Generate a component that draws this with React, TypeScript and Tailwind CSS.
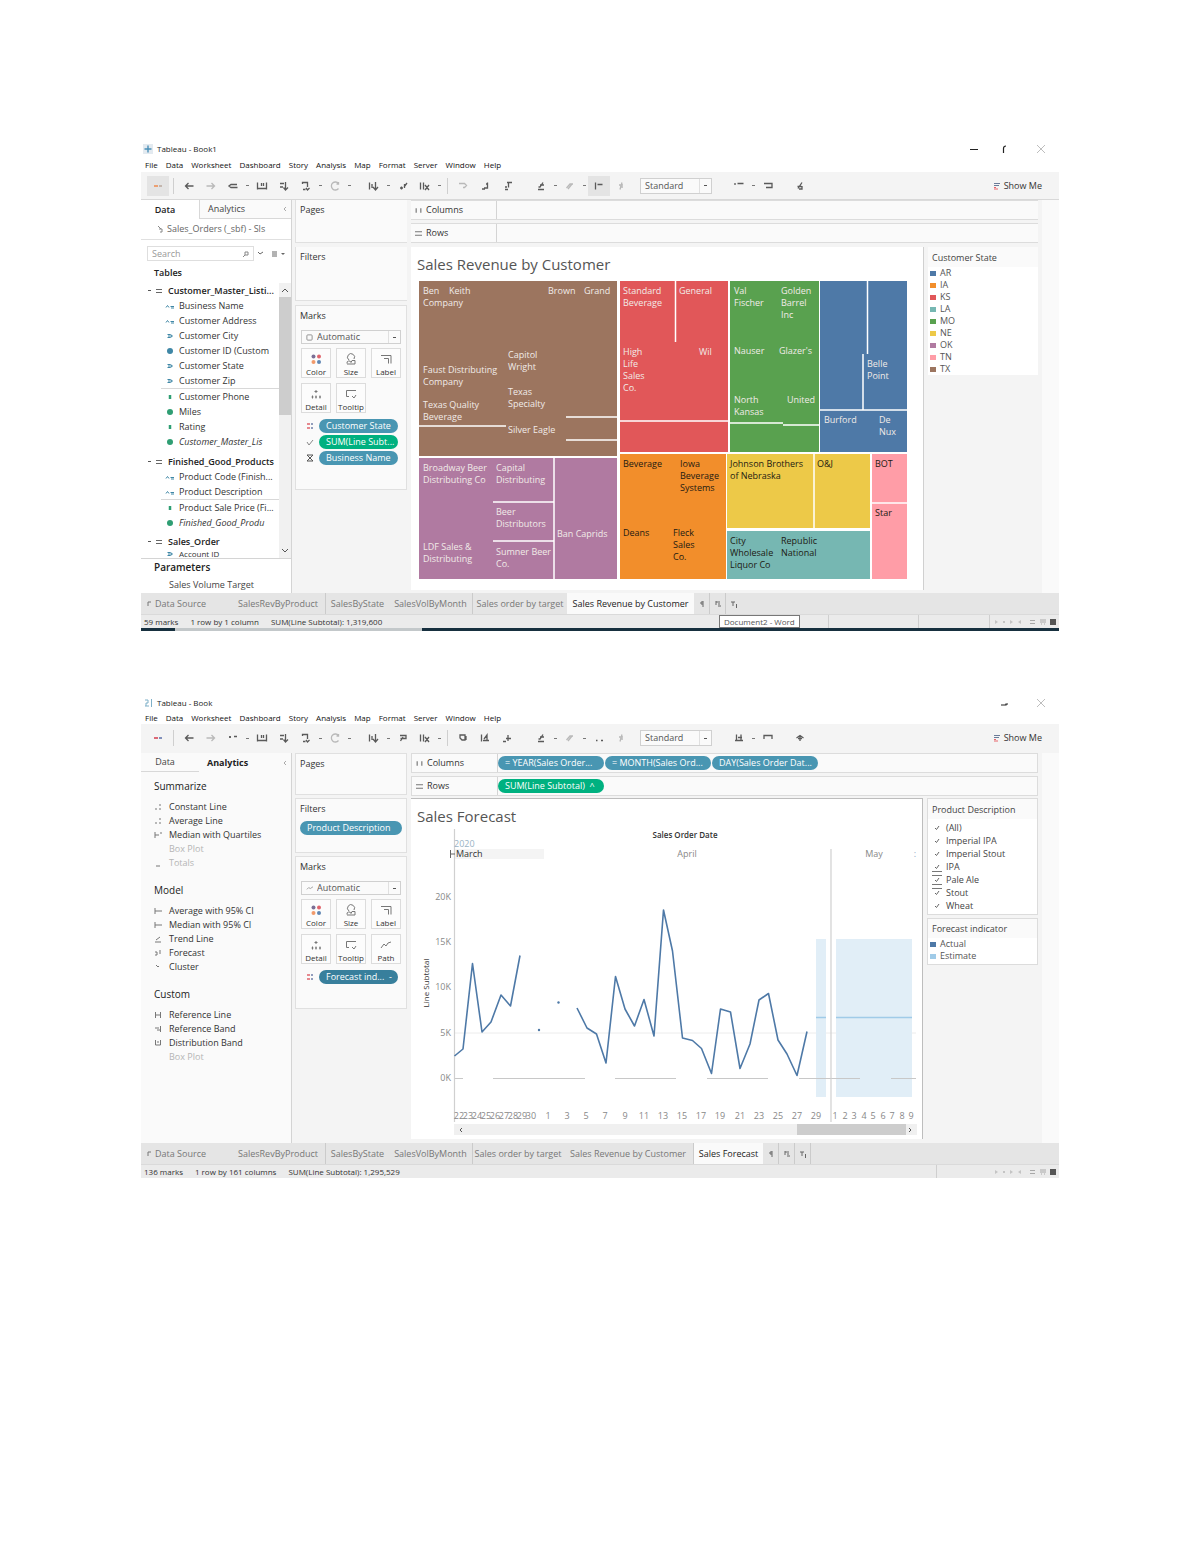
import React, { ReactNode, useState } from "react";

type IconName =
  | "back" | "forward" | "undo" | "save" | "addData" | "pause" | "refresh"
  | "newSheet" | "clear" | "fit" | "swap" | "sortAsc" | "sortDesc" | "highlight"
  | "group" | "labels" | "pin" | "cards" | "present" | "share" | "chartA"
  | "undoAlt" | "clearAlt" | "swapAlt" | "sortAlt" | "labelsAlt" | "presentAlt" | "shareAlt" | "totals";

const iconPaths: Record<IconName, string> = {
  back: "M10.5 6H2.5M5.5 3L2.5 6l3 3",
  forward: "M1.5 6h8M6.5 3l3 3-3 3",
  undo: "M10 4.5H4L2 6l2 1.500h6.500",
  undoAlt: "M2 5h2M3 4v2M7 4.500h3",
  save: "M1.500 2.500v7M1.500 8.500h9M10.500 2.500v7M5.500 3v3M7.500 3v3",
  addData: "M2 3.500h4M7.500 2v8M5.500 7.500l2 2.500 2.500-2.500M2 7h3",
  pause: "M2.500 4V2.500h5V7M3 9.500h2.500M6 8l1.500 2 2-2",
  refresh: "M9.500 3.500a4 4 0 1 0 0 5M9.500 2v2h-2",
  newSheet: "M1.500 2.500v7M4 4v4M7.500 2v8M5 7l2.500 3 2.500-3",
  clear: "M3 8h3M4.500 6.500v3M7 7l3-4M7.500 4v4",
  clearAlt: "M3 3.500h6v3H3.500M6 5L3.500 9",
  chartA: "M1.500 2.500v7M4.500 2.500v7M6 5l4 5M10 5L6 10",
  fit: "M2 3.500h5.500l2 2-2 2H6",
  swap: "M8.500 2.500V8H5M3 9h3M7 4h2",
  swapAlt: "M2.500 2.500v7M5 7l3-4v6M4 8.500h6",
  sortAsc: "M4 9.500h3M6 2.500h5M7.500 2.500v5M4 7h2",
  sortDesc: "M2 9.500h3M5 6.500h5M7 3v6",
  sortAlt: "M3 3h5v5H5L3 6zM9 4v4",
  highlight: "M3 9.500h6M8 2.500L5 7H3.500M5 5h4",
  group: "M2.500 8L6 4h3M4 9l4-5",
  labels: "M2.500 2.500v7M4.500 4.500h5",
  labelsAlt: "M3 8.500h1.500M8 8.500h2",
  pin: "M4 5h4M7 2.500L5 9.500M5 7h3",
  totals: "M3.500 2.500v6M8 2.500v6M2 8.500h8M5 5.500h4",
  cards: "M2 3v2M4.500 3.500h6",
  present: "M2 3.500h8v4H4",
  presentAlt: "M2 7V3.500h8V7",
  share: "M4 8.500l4-6M5 9h3v-3M3.500 6.500h4",
  shareAlt: "M2.500 6L6 3.500 9.500 6M6 4v5M4 6.500h4",
};

const Icon = ({ name, light }: { name: IconName; light?: boolean }) => (
  <svg viewBox="0 0 12 12" className="size-3" aria-hidden="true">
    <path d={iconPaths[name]} fill="none" stroke={light ? "#b9b9b9" : "#5a5a5a"} strokeWidth="1.300" />
  </svg>
);

const ToolButton = ({ name, light, active }: { name: IconName; light?: boolean; active?: boolean }) => (
  <button
    aria-label={name}
    className={`flex h-5 w-[22px] shrink-0 items-center justify-center ${active ? "bg-[#e4e4e4]" : ""}`}
  >
    <Icon name={name} light={light} />
  </button>
);

const Caret = () => (
  <span className="flex w-[7px] shrink-0 justify-center">
    <span className="h-px w-[3px] bg-[#777]" />
  </span>
);

const Divider = () => <span className="mx-1 h-4 w-px shrink-0 bg-[#cfcfcf]" />;

const ShowMeIcon = () => (
  <svg viewBox="0 0 8 8" className="size-2" aria-hidden="true">
    <path d="M1 1.500h6M1 3.500h5" stroke="#6b7c99" strokeWidth="1" />
    <path d="M1 5.500h2M1 7h4" stroke="#e8646a" strokeWidth="1" />
  </svg>
);

const Toolbar = ({ forecast }: { forecast?: boolean }) => (
  <div
    className={`flex items-center border-b bg-[#f4f4f4] pr-[17px] pl-[6px] ${
      forecast ? "h-[29px] border-[#f4f4f4]" : "h-7 border-[#d8d8d8]"
    }`}
  >
    <button
      aria-label="Start page"
      className={`flex h-5 w-[22px] items-center justify-center ${forecast ? "" : "bg-[#e4e4e4]"}`}
    >
      <svg viewBox="0 0 10 6" className="h-[6px] w-[10px]" aria-hidden="true">
        <path d="M1 3h4" stroke={forecast ? "#d33b4c" : "#ef8a4c"} strokeWidth="1.500" />
        <path d="M6 3h3" stroke={forecast ? "#5b6fa8" : "#b9a79c"} strokeWidth="1.500" />
      </svg>
    </button>
    <Divider />
    <ToolButton name="back" />
    <ToolButton name="forward" light />
    <ToolButton name={forecast ? "undoAlt" : "undo"} />
    <Caret />
    <ToolButton name="save" />
    <ToolButton name="addData" />
    <ToolButton name="pause" />
    <Caret />
    <ToolButton name="refresh" light />
    <Caret />
    <span className="w-[10px]" />
    <ToolButton name="newSheet" />
    <Caret />
    <ToolButton name={forecast ? "clearAlt" : "clear"} />
    <ToolButton name="chartA" />
    <Caret />
    <Divider />
    <ToolButton name={forecast ? "sortAlt" : "fit"} light={!forecast} />
    <ToolButton name={forecast ? "swapAlt" : "swap"} />
    <ToolButton name={forecast ? "sortDesc" : "sortAsc"} />
    <span className="w-3" />
    <ToolButton name="highlight" />
    <Caret />
    <ToolButton name="group" light />
    <Caret />
    <ToolButton name={forecast ? "labelsAlt" : "labels"} active={!forecast} />
    <ToolButton name="pin" light />
    <span className="w-2" />
    <FlatSelect label="Fit" value="Standard" className="h-4 w-[72px]" />
    <span className="w-4" />
    <ToolButton name={forecast ? "totals" : "cards"} />
    <Caret />
    <ToolButton name={forecast ? "presentAlt" : "present"} />
    <span className="w-[10px]" />
    <ToolButton name={forecast ? "shareAlt" : "share"} />
    <button className="ml-auto flex items-center gap-[3px] text-[9px] text-[#333]">
      <ShowMeIcon />
      Show Me
    </button>
  </div>
);

const FlatSelect = ({
  label,
  value,
  icon,
  className,
}: {
  label: string;
  value: string;
  icon?: ReactNode;
  className: string;
}) => (
  <div className={`flex items-center border border-[#d0d0d0] bg-[#fafafa] ${className}`}>
    {icon}
    <select
      aria-label={label}
      className="h-full min-w-0 flex-1 appearance-none bg-transparent pl-1 text-[9px] leading-3 text-[#555] outline-none"
    >
      <option>{value}</option>
    </select>
    <span className="flex h-full w-3 items-center justify-center border-l border-[#e0e0e0]">
      <span className="h-px w-[3px] bg-[#555]" />
    </span>
  </div>
);

const menus = ["File", "Data", "Worksheet", "Dashboard", "Story", "Analysis", "Map", "Format", "Server", "Window", "Help"];

const TitleBar = ({ title, forecast }: { title: string; forecast?: boolean }) => (
  <>
    <div className="flex h-4 items-center pr-3 pl-[2px] text-[8px] text-[#222]">
      <svg viewBox="0 0 10 10" className="mr-1 size-[10px]" aria-hidden="true">
        {forecast ? (
          <path d="M2 2h3v3H3v3M6 8H2M8.500 1v8" fill="none" stroke="#7fb0c8" />
        ) : (
          <>
            <rect width="10" height="10" fill="#e3eaf0" />
            <path d="M1.500 5h7M5 1.500v7" stroke="#4a90b8" strokeWidth="1.400" />
          </>
        )}
      </svg>
      {title}
      <div className="ml-auto flex items-center">
        {!forecast && (
          <button aria-label="Minimize" className="flex w-[30px] justify-center">
            <span className="h-px w-2 bg-[#222]" />
          </button>
        )}
        <button aria-label="Restore" className="flex w-[30px] justify-center">
          <svg viewBox="0 0 8 8" className="size-2" aria-hidden="true">
            <path d={forecast ? "M1 6h5V5h2" : "M3.500 8V3.500Q3.500 1 6 1"} fill="none" stroke="#222" strokeWidth="1.200" />
          </svg>
        </button>
        <button aria-label="Close" className="ml-4 flex w-3 justify-center">
          <svg viewBox="0 0 8 8" className="size-2" aria-hidden="true">
            <path d="M0 0l8 8M8 0L0 8" stroke="#bdbdbd" />
          </svg>
        </button>
      </div>
    </div>
    <nav className={`flex items-center gap-2 pl-1 text-[8px] text-[#111] ${forecast ? "h-[13px]" : "h-[15px]"}`}>
      {menus.map((m) => (
        <button key={m}>{m}</button>
      ))}
    </nav>
  </>
);

const pillColors = {
  blue: "bg-[#4996b2]",
  green: "bg-[#00b180]",
  dark: "bg-[#387f9c]",
};

const Pill = ({
  color,
  className,
  children,
}: {
  color: keyof typeof pillColors;
  className?: string;
  children: ReactNode;
}) => (
  <button
    className={`block h-[14px] overflow-hidden rounded-full px-[7px] text-left text-[9px] leading-[14px] whitespace-nowrap text-white ${pillColors[color]} ${className ?? ""}`}
  >
    {children}
  </button>
);

const Card = ({ title, className, children }: { title: string; className?: string; children?: ReactNode }) => (
  <section className={`border border-[#e0e0e0] bg-[#fafafa] px-1 pt-1 ${className ?? ""}`}>
    <h3 className="text-[9px] leading-3 text-[#333]">{title}</h3>
    {children}
  </section>
);

const markIcons: Record<string, ReactNode> = {
  Color: (
    <g stroke="none">
      <circle cx="3.500" cy="3.500" r="2" fill="#7b6f95" />
      <circle cx="9" cy="3.500" r="2" fill="#e0646c" />
      <circle cx="3.500" cy="9" r="2" fill="#f19a6b" />
      <circle cx="9" cy="9" r="2" fill="#5f86b3" />
    </g>
  ),
  Size: <path d="M4 7a3.500 3.500 0 1 1 5-1M2 10.500a2 2 0 0 1 4-1l1-2h3v3.500H2" />,
  Label: <path d="M1 2.500h10v8M4 5.500h4.500v5" />,
  Detail: <path d="M6 2v3M4.500 3.500h3M1.500 9h2M5 9h2M9 9h2M2.500 7.500v3M6 7.500v3M10 7.500v3" />,
  Tooltip: <path d="M11 2.500H1.500v6H4M7 8l2 2 2-3" />,
  Path: <path d="M1 9l3-4 2 2 2-3 3-1" />,
};

const MarkButton = ({ name }: { name: string }) => (
  <button className="flex h-[30px] flex-col items-center justify-between border border-[#dcdcdc] bg-[#fcfcfc] pt-1 text-[8px] leading-[10px] text-[#333]">
    <svg viewBox="0 0 12 12" className="size-3 shrink-0" fill="none" stroke="#777" aria-hidden="true">
      {markIcons[name]}
    </svg>
    {name}
  </button>
);

const MarksCard = ({ names, children, className }: { names: string[]; children: ReactNode; className: string }) => (
  <Card title="Marks" className={className}>
    <div className="px-px">
      <FlatSelect
        label="Mark type"
        value="Automatic"
        className="mt-2 h-[14px]"
        icon={
          <svg viewBox="0 0 8 8" className="ml-1 size-[7px]" aria-hidden="true">
            {names.includes("Path") ? (
              <path d="M1 5l2-2 2 1 3-2" fill="none" stroke="#999" />
            ) : (
              <rect x="1" y="1" width="6" height="6" rx="1" fill="none" stroke="#888" />
            )}
          </svg>
        }
      />
      <div className="mt-1 grid grid-cols-3 gap-[5px]">
        {names.map((n) => (
          <MarkButton key={n} name={n} />
        ))}
      </div>
      <div className="mt-[6px] flex flex-col gap-[2px]">{children}</div>
    </div>
  </Card>
);

const MarkRow = ({
  icon,
  color,
  children,
}: {
  icon: "color" | "size" | "detail";
  color: keyof typeof pillColors;
  children: ReactNode;
}) => (
  <div className="flex items-center">
    <svg viewBox="0 0 8 8" className="mx-[5px] size-2 shrink-0" fill="none" aria-hidden="true">
      {icon === "color" && (
        <>
          <path d="M1 2h3M1 6h3" stroke="#e0646c" strokeWidth="1.500" />
          <path d="M5 2h2M5 6h2" stroke="#6f7fa8" strokeWidth="1.500" />
        </>
      )}
      {icon === "size" && <path d="M1 4l2 3 4-5" stroke="#888" />}
      {icon === "detail" && <path d="M1 1h6L4 4l3 3H1l3-3z" stroke="#555" />}
    </svg>
    <Pill color={color} className="mr-[3px] flex-1">
      {children}
    </Pill>
  </div>
);

const Shelf = ({ name, boxed, children }: { name: "Columns" | "Rows"; boxed?: boolean; children?: ReactNode }) => (
  <div className={`flex h-5 bg-[#fafafa] ${boxed ? "border border-[#dcdcdc]" : "border-y border-[#dcdcdc]"}`}>
    <div className="flex w-[86px] shrink-0 items-center gap-1 border-r border-[#d4d4d4] pl-1 text-[9px] text-[#333]">
      <svg viewBox="0 0 6 6" className="size-[7px]" aria-hidden="true">
        <path d={name === "Columns" ? "M1 1v4M5 1v4" : "M0 1.500h6M0 4.500h6"} stroke="#777" strokeWidth="1" />
      </svg>
      {name}
    </div>
    <div className="flex min-w-0 flex-1 items-center gap-px">{children}</div>
  </div>
);

type FieldKind = "text" | "geo" | "key" | "num" | "dot";

const FieldIcon = ({ kind }: { kind: FieldKind }) => {
  const color = kind === "num" || kind === "dot" ? "#2f9e73" : "#3f87a6";
  return (
    <svg viewBox="0 0 10 8" className="h-2 w-[10px] shrink-0" fill="none" stroke={color} aria-hidden="true">
      {kind === "text" && <path d="M1 5.500l1.500-2L4 5.500M5.500 4.500h3.500M6 6h3" />}
      {kind === "geo" && <path d="M2.500 2.500h3l2 1.500-2 1.500h-3M3 4h4" />}
      {kind === "key" && <circle cx="5" cy="4" r="3" fill={color} stroke="none" />}
      {kind === "num" && <path d="M5 2v4" strokeWidth="2.500" />}
      {kind === "dot" && <circle cx="5" cy="4" r="3" fill={color} stroke="none" />}
    </svg>
  );
};

const Field = ({
  kind,
  italic,
  last,
  children,
}: {
  kind: FieldKind;
  italic?: boolean;
  last?: boolean;
  children: ReactNode;
}) => (
  <li
    className={`flex items-center gap-1 pl-6 whitespace-nowrap text-[#333] ${italic ? "italic" : ""} ${
      last ? "h-[10px] text-[8px] leading-[10px]" : "h-[15px] text-[9px]"
    }`}
  >
    <FieldIcon kind={kind} />
    {children}
  </li>
);

const TableName = ({ className, children }: { className?: string; children: ReactNode }) => (
  <h4 className={`flex h-[15px] items-center pl-[7px] text-[9px] font-semibold whitespace-nowrap text-[#222] ${className ?? ""}`}>
    <span className="h-px w-[3px] bg-[#555]" />
    <svg viewBox="0 0 6 6" className="mr-[6px] ml-[5px] size-[6px]" aria-hidden="true">
      <path d="M0 1.500h6M0 4.500h6" stroke="#666" />
    </svg>
    {children}
  </h4>
);

const PaneTabs = ({ active }: { active: "Data" | "Analytics" }) => (
  <div className="flex h-[19px] text-[9px] text-[#444]">
    <button
      className={`w-[58px] pr-[10px] ${
        active === "Data" ? "bg-white font-semibold text-[#222]" : "border-b border-[#d8d8d8]"
      }`}
    >
      Data
    </button>
    <button
      className={`flex flex-1 items-center justify-between pr-1 pl-2 ${
        active === "Analytics" ? "font-bold text-[#222]" : "border-b border-l border-[#d8d8d8] bg-[#fafafa]"
      }`}
    >
      Analytics
      <svg viewBox="0 0 4 6" className="h-[6px] w-1" aria-hidden="true">
        <path d="M3 1L1 3l2 2" fill="none" stroke="#aaa" />
      </svg>
    </button>
  </div>
);

const DataPane = () => {
  const [search, setSearch] = useState("");
  return (
    <aside className="w-[151px] shrink-0 border-r border-[#d4d4d4] bg-white">
      <PaneTabs active="Data" />
      <div className="flex h-[21px] items-center gap-1 border-b border-[#e0e0e0] pl-4 text-[9px] text-[#666]">
        <svg viewBox="0 0 6 8" className="h-2 w-[6px]" fill="none" stroke="#888" aria-hidden="true">
          <path d="M1 1l3 3M2 4h3v3H3" />
        </svg>
        Sales_Orders (_sbf) - Sls
      </div>
      <div className="flex items-center gap-1 pt-[6px] pl-[6px]">
        <div className="flex h-[15px] w-[107px] items-center border border-[#dedede] pr-1">
          <input
            aria-label="Search"
            placeholder="Search"
            value={search}
            onChange={(e) => setSearch(e.target.value)}
            className="min-w-0 flex-1 pl-1 text-[9px] outline-none placeholder:text-[#999]"
          />
          <svg viewBox="0 0 6 6" className="size-[6px]" fill="none" stroke="#888" aria-hidden="true">
            <path d="M2 1h3v3H2zM2 4L0 6" />
          </svg>
        </div>
        <svg viewBox="0 0 30 8" className="h-2 w-[30px]" fill="none" stroke="#666" aria-hidden="true">
          <path d="M0 2l2 2 3-2M14 2h5M14 4h5M14 6h5" />
          <path d="M23 3h4l-2 2z" fill="#666" stroke="none" />
        </svg>
      </div>
      <h3 className="flex h-[22px] items-center pt-[2px] pl-[13px] text-[9px] font-semibold text-[#222]">Tables</h3>
      <div className="flex h-[275px] overflow-hidden">
        <div className="min-w-0 flex-1 overflow-hidden">
          <TableName>Customer_Master_Listi...</TableName>
          <ul>
            <Field kind="text">Business Name</Field>
            <Field kind="text">Customer Address</Field>
            <Field kind="geo">Customer City</Field>
            <Field kind="key">Customer ID (Custom</Field>
            <Field kind="geo">Customer State</Field>
            <Field kind="geo">Customer Zip</Field>
          </ul>
          <ul className="ml-5 border-t border-[#d8d8d8] [&>li]:pl-1">
            <Field kind="num">Customer Phone</Field>
            <Field kind="dot">Miles</Field>
            <Field kind="num">Rating</Field>
            <Field kind="dot" italic>Customer_Master_Lis</Field>
          </ul>
          <TableName className="mt-[5px]">Finished_Good_Products</TableName>
          <ul>
            <Field kind="text">Product Code (Finish...</Field>
            <Field kind="text">Product Description</Field>
          </ul>
          <ul className="ml-5 border-t border-[#d8d8d8] [&>li]:pl-1">
            <Field kind="num">Product Sale Price (Fi...</Field>
            <Field kind="dot" italic>Finished_Good_Produ</Field>
          </ul>
          <TableName className="mt-1">Sales_Order</TableName>
          <ul>
            <Field kind="geo" last>Account ID</Field>
          </ul>
        </div>
        <div className="flex w-3 flex-col items-center bg-[#f1f1f1]">
          <svg viewBox="0 0 8 6" className="my-1 h-[6px] w-2" fill="none" stroke="#555" aria-hidden="true">
            <path d="M1 5l3-3 3 3" />
          </svg>
          <div className="h-[118px] w-full bg-[#cdcdcd]" />
          <svg viewBox="0 0 8 6" className="mt-auto mb-1 h-[6px] w-2" fill="none" stroke="#555" aria-hidden="true">
            <path d="M1 1l3 3 3-3" />
          </svg>
        </div>
      </div>
      <div className="border-t border-[#d4d4d4] pl-[13px]">
        <h3 className="h-[17px] text-[10px] leading-[17px] font-semibold text-[#222]">Parameters</h3>
        <p className="h-[17px] pl-[15px] text-[9px] leading-[17px] text-[#444]">Sales Volume Target</p>
      </div>
    </aside>
  );
};

const analyticsGroups: { title: string; items: { label: string; d?: string; off?: boolean }[] }[] = [
  {
    title: "Summarize",
    items: [
      { label: "Constant Line", d: "M1 6h2M6 1v2M6 5v2" },
      { label: "Average Line", d: "M1 6h2M6 1v2M6 5v2" },
      { label: "Median with Quartiles", d: "M1 1v6M1 4h4M6 2h2" },
      { label: "Box Plot", off: true },
      { label: "Totals", d: "M2 7h4", off: true },
    ],
  },
  {
    title: "Model",
    items: [
      { label: "Average with 95% CI", d: "M1 1v6M1 4h7" },
      { label: "Median with 95% CI", d: "M1 1v6M1 4h7" },
      { label: "Trend Line", d: "M1 7h6M2 5l4-3" },
      { label: "Forecast", d: "M1 3h2v3H1M6 1v4" },
      { label: "Cluster", d: "M2 2l2 2 1-1" },
    ],
  },
  {
    title: "Custom",
    items: [
      { label: "Reference Line", d: "M1.500 1v6M6.500 1v6M2 4h4" },
      { label: "Reference Band", d: "M1 3h4M3 5h3M6.500 1v6" },
      { label: "Distribution Band", d: "M1.500 1v5h5V1M3 3h2" },
      { label: "Box Plot", off: true },
    ],
  },
];

const AnalyticsPane = () => (
  <aside className="w-[151px] shrink-0 border-r border-[#d4d4d4] bg-[#fafafa]">
    <PaneTabs active="Analytics" />
    <div className="flex flex-col gap-[10px] pt-1 pl-[13px]">
      {analyticsGroups.map((g) => (
        <section key={g.title}>
          <h3 className="mb-1 text-[10px] leading-5 text-[#222]">{g.title}</h3>
          <ul>
            {g.items.map((item) => (
              <li
                key={item.label}
                className={`flex h-[14px] items-center gap-[7px] text-[9px] whitespace-nowrap ${
                  item.off ? "text-[#b5b5b5]" : "text-[#333]"
                }`}
              >
                <svg viewBox="0 0 8 8" className="size-2" fill="none" stroke="#777" aria-hidden="true">
                  {item.d && <path d={item.d} />}
                </svg>
                {item.label}
              </li>
            ))}
          </ul>
        </section>
      ))}
    </div>
  </aside>
);

const blocks: [string, number, number, number, number][] = [
  ["#9c755f", 0, 0, 198, 175],
  ["#b07aa1", 0, 177, 198, 121],
  ["#e15759", 201, 0, 108, 171],
  ["#59a14f", 311, 0, 89, 171],
  ["#4e79a7", 401, 0, 87, 171],
  ["#f28e2b", 201, 173, 106, 125],
  ["#edc948", 308, 173, 143, 74],
  ["#76b7b2", 308, 250, 143, 48],
  ["#ff9da7", 453, 173, 35, 125],
];

const dividers =
  "M0 145H87M147 136H198M147 159H198M135 177V298M74 221H135M74 260H135M256.500 0V61M201 140H309M311 142H364M364 144H400M448.500 0V73M444 73V129M401 129H488M395 173V247M453 222H488";

// x, centre of the first line, lines
const customers: [number, number, string[]][] = [
  [4, 10, ["Ben", "Company"]],
  [30, 10, ["Keith"]],
  [129, 10, ["Brown"]],
  [165, 10, ["Grand"]],
  [89, 74, ["Capitol", "Wright"]],
  [4, 89, ["Faust Distributing", "Company"]],
  [89, 111, ["Texas", "Specialty"]],
  [4, 124, ["Texas Quality", "Beverage"]],
  [89, 149, ["Silver Eagle"]],
  [204, 10, ["Standard", "Beverage"]],
  [260, 10, ["General"]],
  [204, 71, ["High", "Life", "Sales", "Co."]],
  [280, 71, ["Wil"]],
  [315, 10, ["Val", "Fischer"]],
  [362, 10, ["Golden", "Barrel", "Inc"]],
  [315, 70, ["Nauser"]],
  [360, 70, ["Glazer's"]],
  [315, 119, ["North", "Kansas"]],
  [368, 119, ["United"]],
  [448, 83, ["Belle", "Point"]],
  [405, 139, ["Burford"]],
  [460, 139, ["De", "Nux"]],
  [4, 187, ["Broadway Beer", "Distributing Co"]],
  [77, 187, ["Capital", "Distributing"]],
  [77, 231, ["Beer", "Distributors"]],
  [77, 271, ["Sumner Beer", "Co."]],
  [138, 253, ["Ban Caprids"]],
  [4, 266, ["LDF Sales &", "Distributing"]],
];

const customersDark: [number, number, string[]][] = [
  [204, 183, ["Beverage"]],
  [261, 183, ["Iowa", "Beverage", "Systems"]],
  [204, 252, ["Deans"]],
  [254, 252, ["Fleck", "Sales", "Co."]],
  [311, 183, ["Johnson Brothers", "of Nebraska"]],
  [398, 183, ["O&J"]],
  [311, 260, ["City", "Wholesale", "Liquor Co"]],
  [362, 260, ["Republic", "National"]],
  [456, 183, ["BOT"]],
  [456, 232, ["Star"]],
];

const TreeLabels = ({ data, fill }: { data: typeof customers; fill: string }) => (
  <g fill={fill} fontSize="9">
    {data.map(([x, y, lines]) =>
      lines.map((line, i) => (
        <text key={`${x}-${y}-${i}`} x={x} y={y + 3 + i * 12}>
          {line}
        </text>
      ))
    )}
  </g>
);

const Treemap = () => (
  <svg viewBox="0 0 488 298" className="block h-auto w-full" role="img" aria-label="Sales Revenue by Customer">
    {blocks.map(([color, x, y, w, h]) => (
      <rect key={color} x={x} y={y} width={w} height={h} fill={color} />
    ))}
    <path d={dividers} stroke="#fff" strokeWidth="1.500" />
    <TreeLabels data={customers} fill="#f1ebe8" />
    <TreeLabels data={customersDark} fill="#1d1a12" />
  </svg>
);

const aprilDays = Array.from({ length: 15 }, (_, i) => i * 2 + 1);
const marchDays = Array.from({ length: 9 }, (_, i) => i + 22);
const mayDays = Array.from({ length: 9 }, (_, i) => i + 1);

const ForecastChart = () => (
  <svg viewBox="0 0 511 296" className="block h-auto w-full" role="img" aria-label="Sales Forecast">
    <rect x="43" y="21" width="90" height="10" fill="#f4f4f4" />
    <path d="M43 205H505" stroke="#ececec" />
    <rect x="405" y="111" width="10" height="158" fill="#e1eef7" />
    <rect x="425" y="111" width="76" height="158" fill="#e1eef7" />
    <path d="M405 189.500h10M425 189.500h76" stroke="#a0cbe8" strokeWidth="1.500" />
    <path d="M43 250.500h9M82 250.500h92M204 250.500h61M296 250.500h61M388 250.500h61M480 250.500h25" stroke="#c8c8c8" />
    <path d="M43.500 1V294M420 21V294" stroke="#d0d0d0" strokeWidth="1.200" />
    <g fill="none" stroke="#4e79a7" strokeWidth="1.600" strokeLinejoin="round">
      <path d="M43.500 228L52 221L61.500 135.500L71 204L80 194L90 167L99.500 178L109 127.500" />
      <path d="M166 180L176 200L185.500 206L195 235L204.500 148.500L214 181L223.500 198L233 171.500L243 208L252.500 82L261.500 123L271.500 210L281.500 212.500L290.500 220.500L300.500 245.500L309.500 181L319.500 184L329 240.500L339 216L348 172L357.500 165.500L367 212L376 226L386 247.500L396 203.500" />
    </g>
    <circle cx="128" cy="202" r="1.200" fill="#4e79a7" />
    <circle cx="147.500" cy="174.500" r="1.200" fill="#4e79a7" />
    <g fontSize="9" fill="#888">
      <text x="43" y="19" fill="#9ab2c4">2020</text>
      <text x="45" y="29" fill="#333">March</text>
      <text x="276" y="29" textAnchor="middle">April</text>
      <text x="463" y="29" textAnchor="middle">May</text>
      <text x="504" y="29" textAnchor="middle" fill="#8fa9c4">:</text>
      <g textAnchor="end">
        <text x="40" y="72">20K</text>
        <text x="40" y="117">15K</text>
        <text x="40" y="162">10K</text>
        <text x="40" y="208">5K</text>
        <text x="40" y="253">0K</text>
      </g>
      <g textAnchor="middle">
        {marchDays.map((d, i) => (
          <text key={`m${d}`} x={48 + i * 9} y="291">{d}</text>
        ))}
        {aprilDays.map((d, i) => (
          <text key={`a${d}`} x={Math.round(137 + i * 19.150)} y="291">{d}</text>
        ))}
        {mayDays.map((d, i) => (
          <text key={`y${d}`} x={Math.round(424 + i * 9.500)} y="291">{d}</text>
        ))}
      </g>
    </g>
    <path d="M39.500 22v8M40 26h4" stroke="#666" />
    <text x="274" y="10" textAnchor="middle" fontSize="8" fontWeight="600" fill="#333">Sales Order Date</text>
    <text transform="translate(18 155) rotate(-90)" textAnchor="middle" fontSize="8" fill="#333">Line Subtotal</text>
  </svg>
);

const Swatch = ({ label, className }: { label: string; className: string }) => (
  <li className="flex h-3 items-center gap-1 pl-[2px] text-[9px] text-[#555]">
    <span className={`h-[5px] w-[6px] ${className}`} />
    {label}
  </li>
);

const StateLegend = () => (
  <section className="bg-white">
    <h3 className="h-5 bg-[#fafafa] pt-[3px] pl-1 text-[9px] leading-4 text-[#444]">Customer State</h3>
    <ul>
      <Swatch label="AR" className="bg-[#4e79a7]" />
      <Swatch label="IA" className="bg-[#f28e2b]" />
      <Swatch label="KS" className="bg-[#e15759]" />
      <Swatch label="LA" className="bg-[#76b7b2]" />
      <Swatch label="MO" className="bg-[#59a14f]" />
      <Swatch label="NE" className="bg-[#edc948]" />
      <Swatch label="OK" className="bg-[#b07aa1]" />
      <Swatch label="TN" className="bg-[#ff9da7]" />
      <Swatch label="TX" className="bg-[#9c755f]" />
    </ul>
  </section>
);

const products = ["(All)", "Imperial IPA", "Imperial Stout", "IPA", "Pale Ale", "Stout", "Wheat"];

const ProductFilter = () => (
  <fieldset className="border border-[#dcdcdc] bg-white pb-[2px]">
    <h3 className="mb-[2px] h-5 bg-[#fafafa] pl-1 text-[9px] leading-[21px] text-[#444]">Product Description</h3>
    {products.map((p, i) => (
      <label key={p} className="flex h-[13px] items-center gap-1 pl-1 text-[9px] text-[#444]">
        <span className="grid size-[10px] place-items-center">
          <input
            type="checkbox"
            defaultChecked
            className={`peer col-start-1 row-start-1 size-[10px] appearance-none ${
              i === 3 || i === 4 ? "border-b border-[#777]" : ""
            } ${i === 4 || i === 5 ? "border-t border-[#777]" : ""}`}
          />
          <svg
            viewBox="0 0 6 6"
            className="pointer-events-none invisible col-start-1 row-start-1 size-[6px] peer-checked:visible"
            aria-hidden="true"
          >
            <path d="M1 3l1.500 1.500L5 1" fill="none" stroke="#666" />
          </svg>
        </span>
        {p}
      </label>
    ))}
  </fieldset>
);

const IndicatorLegend = () => (
  <section className="border border-[#dcdcdc] bg-white">
    <h3 className="h-[19px] bg-[#fafafa] pl-1 text-[9px] leading-5 text-[#444]">Forecast indicator</h3>
    <ul className="pb-[2px]">
      <Swatch label="Actual" className="bg-[#4e79a7]" />
      <Swatch label="Estimate" className="bg-[#a0cbe8]" />
    </ul>
  </section>
);

const SheetTab = ({
  active,
  className,
  children,
}: {
  active?: boolean;
  className: string;
  children: ReactNode;
}) => (
  <button
    className={`h-full shrink-0 text-center whitespace-nowrap ${active ? "bg-[#fafafa] font-medium text-[#222]" : ""} ${className}`}
  >
    {children}
  </button>
);

const SheetTabs = ({ forecast }: { forecast?: boolean }) => (
  <div className="flex h-[21px] items-center bg-[#e5e5e5] text-[9px] text-[#777]">
    <button className="flex w-[90px] items-center gap-1 pl-[6px]">
      <svg viewBox="0 0 4 6" className="h-[6px] w-1" fill="none" stroke="#777" aria-hidden="true">
        <path d="M4 1H1v4" />
      </svg>
      Data Source
    </button>
    <SheetTab className="w-[95px] border-r border-[#cbcbcb]">SalesRevByProduct</SheetTab>
    <SheetTab className="w-[63px]">SalesByState</SheetTab>
    <SheetTab className="w-[84px] border-r border-[#cbcbcb]">SalesVolByMonth</SheetTab>
    <SheetTab className={forecast ? "w-[90px]" : "w-[94px]"}>Sales order by target</SheetTab>
    <SheetTab active={!forecast} className={forecast ? "w-[131px] border-r border-[#cbcbcb]" : "w-[127px]"}>
      Sales Revenue by Customer
    </SheetTab>
    {forecast && (
      <SheetTab active className="w-[69px]">
        Sales Forecast
      </SheetTab>
    )}
    {["New worksheet", "New dashboard", "New story"].map((label, i) => (
      <button
        key={label}
        aria-label={label}
        className={`flex h-full w-4 items-center justify-center ${i < 2 || forecast ? "border-r border-[#cbcbcb]" : ""}`}
      >
        <svg viewBox="0 0 8 8" className="size-2" fill="none" stroke="#666" aria-hidden="true">
          <path d={["M5 1v6M5 2H3v2h2", "M2 1v4M5 1v6M6 6h1M2 2h2", "M1 2h4M3 2v4M6.500 4v4"][i]} />
        </svg>
      </button>
    ))}
  </div>
);

const StatusBar = ({ items, tooltip }: { items: string[]; tooltip?: string }) => (
  <div className="relative flex h-[14px] items-center gap-3 border-t border-[#dadada] bg-[#ebebeb] pl-[3px] text-[8px] text-[#333]">
    {items.map((s) => (
      <span key={s} className="whitespace-nowrap">
        {s}
      </span>
    ))}
    <div className="ml-auto flex h-full">
      {tooltip && <span className="w-[90px] border-l border-[#cfcfcf]" />}
      <span className={`border-l border-[#cfcfcf] ${tooltip ? "w-[71px]" : "w-[53px]"}`} />
      <span className={`flex w-[70px] items-center justify-end pr-[3px] ${tooltip ? "border-l border-[#cfcfcf]" : ""}`}>
        <svg viewBox="0 0 62 8" className="h-2 w-[62px]" aria-hidden="true">
          <path d="M1 2l3 2-3 2zM9 3h2v2H9zM16 2l3 2-3 2zM27 2l-3 2 3 2z" fill="#c4c4c4" />
          <path d="M36 2.500h5M36 5.500h5M46 2h6M46 4h6M47 6h1M50 6h1" stroke="#a8a8a8" />
          <path d="M56 1h6v6h-6z" fill="#555" />
        </svg>
      </span>
    </div>
    {tooltip && (
      <span className="absolute top-0 left-[578px] h-[13px] border border-[#777] bg-white px-1 text-[8px] leading-[11px] whitespace-nowrap text-[#555]">
        {tooltip}
      </span>
    )}
  </div>
);

const ViewTitle = ({ children }: { children: ReactNode }) => (
  <h2 className="text-[15px] leading-5 text-[#555]">{children}</h2>
);

const CustomerWindow = () => (
  <section>
    <TitleBar title="Tableau - Book1" />
    <Toolbar />
    <div className="flex bg-[#f4f4f4]">
      <DataPane />
      <div className="ml-[3px] flex w-28 shrink-0 flex-col gap-1 pb-[103px]">
        <Card title="Pages" className="h-[43px] border-t-0 border-r-0 border-[#dcdcdc]" />
        <Card title="Filters" className="h-[54px] border-t-0 border-r-0 border-[#dcdcdc]" />
        <MarksCard names={["Color", "Size", "Label", "Detail", "Tooltip"]} className="flex-1">
          <MarkRow icon="color" color="blue">Customer State</MarkRow>
          <MarkRow icon="size" color="green">SUM(Line Subt...</MarkRow>
          <MarkRow icon="detail" color="blue">Business Name</MarkRow>
        </MarksCard>
      </div>
      <main className="ml-1 min-w-0 flex-1">
        <div className="flex flex-col gap-[3px]">
          <Shelf name="Columns" />
          <Shelf name="Rows" />
        </div>
        <div className="mt-1 flex gap-1">
          <div className="min-w-0 flex-1 border-r border-[#d0d0d0] bg-white pt-[7px] pr-4 pb-[11px] pl-2">
            <div className="-ml-[2px] pb-[7px]">
              <ViewTitle>Sales Revenue by Customer</ViewTitle>
            </div>
            <Treemap />
          </div>
          <div className="w-[110px] shrink-0">
            <StateLegend />
          </div>
        </div>
      </main>
      <div className="ml-1 w-[17px] shrink-0 bg-[#fafafa]" />
    </div>
    <SheetTabs />
    <StatusBar
      items={["59 marks", "1 row by 1 column", "SUM(Line Subtotal): 1,319,600"]}
      tooltip="Document2 - Word"
    />
    <div className="flex h-[3px] bg-[#17303f]">
      <div className="ml-[34px] w-[247px] bg-[#c3c8ca]" />
    </div>
  </section>
);

const ForecastWindow = () => (
  <section>
    <TitleBar title="Tableau - Book" forecast />
    <Toolbar forecast />
    <div className="flex bg-[#f4f4f4]">
      <AnalyticsPane />
      <div className="ml-[3px] flex w-28 shrink-0 flex-col gap-[3px] pb-[134px]">
        <Card title="Pages" className="h-[42px]" />
        <Card title="Filters" className="h-[55px]">
          <Pill color="blue" className="mt-[6px] w-full">
            Product Description
          </Pill>
        </Card>
        <MarksCard names={["Color", "Size", "Label", "Detail", "Tooltip", "Path"]} className="flex-1">
          <MarkRow icon="color" color="dark">
            Forecast ind... &nbsp;-
          </MarkRow>
        </MarksCard>
      </div>
      <main className="ml-1 min-w-0 flex-1 pb-1">
        <div className="flex flex-col gap-[3px]">
          <Shelf name="Columns" boxed>
            <Pill color="blue" className="w-[106px]">
              = YEAR(Sales Order...
            </Pill>
            <Pill color="blue" className="w-[106px]">
              = MONTH(Sales Ord...
            </Pill>
            <Pill color="blue" className="w-[106px]">
              DAY(Sales Order Dat...
            </Pill>
          </Shelf>
          <Shelf name="Rows" boxed>
            <Pill color="green" className="w-[106px]">
              SUM(Line Subtotal) &nbsp;^
            </Pill>
          </Shelf>
        </div>
        <div className="mt-[2px] flex gap-1">
          <div className="min-w-0 flex-1 border-t border-r border-[#bdbdbd] bg-white pt-[7px] pb-1">
            <div className="pb-[2px] pl-[6px]">
              <ViewTitle>Sales Forecast</ViewTitle>
            </div>
            <ForecastChart />
            <div className="mr-[5px] ml-[43px] flex h-[11px] items-center bg-[#f0f0f0] px-1">
              <svg viewBox="0 0 6 6" className="size-[6px]" fill="none" stroke="#555" aria-hidden="true">
                <path d="M4 1L2 3l2 2" />
              </svg>
              <div className="mr-px ml-auto h-full w-[109px] bg-[#cdcdcd]" />
              <svg viewBox="0 0 6 6" className="size-[6px]" fill="none" stroke="#555" aria-hidden="true">
                <path d="M2 1l2 2-2 2" />
              </svg>
            </div>
          </div>
          <div className="flex w-[111px] shrink-0 flex-col gap-[3px]">
            <ProductFilter />
            <IndicatorLegend />
          </div>
        </div>
      </main>
      <div className="ml-1 w-[17px] shrink-0 bg-[#fafafa]" />
    </div>
    <SheetTabs forecast />
    <StatusBar items={["136 marks", "1 row by 161 columns", "SUM(Line Subtotal): 1,295,529"]} />
  </section>
);

const App = () => {
  return (
    <div className="min-h-screen bg-white px-[141px] pt-[141px] font-['Open_Sans','Noto_Sans',sans-serif]">
      <div className="flex flex-col gap-16">
        <CustomerWindow />
        <ForecastWindow />
      </div>
    </div>
  );
};

export default App;
